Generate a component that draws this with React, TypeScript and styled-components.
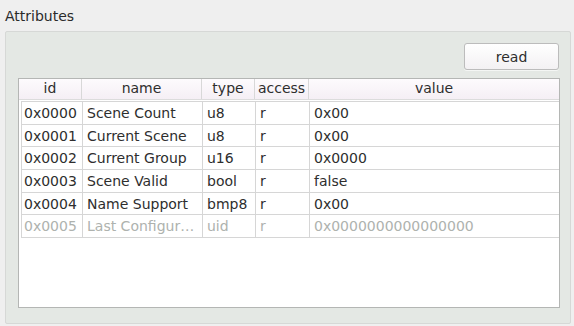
import styled, { createGlobalStyle } from 'styled-components'

type Attribute = {
  id: string
  name: string
  type: string
  access: string
  value: string
  disabled?: boolean
}

const attributes: Attribute[] = [
  { id: '0x0000', name: 'Scene Count', type: 'u8', access: 'r', value: '0x00' },
  { id: '0x0001', name: 'Current Scene', type: 'u8', access: 'r', value: '0x00' },
  { id: '0x0002', name: 'Current Group', type: 'u16', access: 'r', value: '0x0000' },
  { id: '0x0003', name: 'Scene Valid', type: 'bool', access: 'r', value: 'false' },
  { id: '0x0004', name: 'Name Support', type: 'bmp8', access: 'r', value: '0x00' },
  {
    id: '0x0005',
    name: 'Last Configur…',
    type: 'uid',
    access: 'r',
    value: '0x0000000000000000',
    disabled: true,
  },
]

const columns = [
  { key: 'id', label: 'id', width: 63 },
  { key: 'name', label: 'name', width: 120 },
  { key: 'type', label: 'type', width: 53 },
  { key: 'access', label: 'access', width: 54 },
  { key: 'value', label: 'value', width: 250 },
] as const

function App() {
  return (
    <>
      <GlobalStyle />
      <Page>
        <Title>Attributes</Title>
        <GroupBox>
          <Toolbar>
            <ReadButton type="button">read</ReadButton>
          </Toolbar>
          <TableFrame>
            <HeaderRow>
              {columns.map((c) => (
                <HeaderCell key={c.key} $width={c.width}>
                  {c.label}
                </HeaderCell>
              ))}
            </HeaderRow>
            <Grid>
              <colgroup>
                {columns.map((c) => (
                  <col key={c.key} style={{ width: c.key === 'id' ? c.width - 2 : c.width }} />
                ))}
              </colgroup>
              <tbody>
                {attributes.map((a) => (
                  <Row key={a.id} $disabled={a.disabled}>
                    <Cell>{a.id}</Cell>
                    <Cell>{a.name}</Cell>
                    <Cell>{a.type}</Cell>
                    <Cell>{a.access}</Cell>
                    <Cell>{a.value}</Cell>
                  </Row>
                ))}
              </tbody>
            </Grid>
          </TableFrame>
        </GroupBox>
      </Page>
    </>
  )
}

const GlobalStyle = createGlobalStyle`
  html, body {
    margin: 0;
    padding: 0;
    background: #efefef;
  }
  body {
    font-family: "DejaVu Sans", "Liberation Sans", sans-serif;
    font-size: 14px;
    color: #2e2e2e;
  }
`

const Page = styled.div`
  width: 574px;
  height: 326px;
  box-sizing: border-box;
  padding: 8px 3px 2px 5px;
  display: flex;
  flex-direction: column;
`

const Title = styled.div`
  height: 17px;
  line-height: 17px;
  font-size: 14px;
  margin-bottom: 6px;
  color: #2a2a2a;
`

const GroupBox = styled.div`
  flex: 1;
  display: flex;
  flex-direction: column;
  box-sizing: border-box;
  border: 1px solid #d6d8d6;
  border-radius: 2px;
  background: #e4e8e4;
  padding: 11px 10px 15px 12px;
  gap: 8px;
`

const Toolbar = styled.div`
  display: flex;
  justify-content: flex-end;
`

const ReadButton = styled.button`
  width: 95px;
  height: 27px;
  margin-right: 1px;
  font-family: inherit;
  font-size: 14px;
  color: #2e2e2e;
  border: 1px solid #bcbcbc;
  border-radius: 3px;
  background: linear-gradient(#ffffff, #f3f1f3);
  box-shadow: 0 1px 0 rgba(255, 255, 255, 0.6);
  padding: 0;
`

const TableFrame = styled.div`
  flex: 1;
  box-sizing: border-box;
  border: 1px solid #b4b6b4;
  background: #ffffff;
  display: flex;
  flex-direction: column;
  overflow: hidden;
`

const HeaderRow = styled.div`
  display: flex;
  height: 20px;
  border-bottom: 1px solid #dcdcdc;
  background: linear-gradient(#fdfbfd, #f5eff5);
`

const HeaderCell = styled.div<{ $width: number }>`
  width: ${(p) => p.$width}px;
  flex: none;
  box-sizing: border-box;
  border-right: 1px solid #d8d8d8;
  text-align: center;
  line-height: 19px;
  color: #2e2e2e;

  &:last-child {
    flex: 1;
    border-right: none;
  }
`

const Grid = styled.table`
  border-collapse: collapse;
  table-layout: fixed;
  margin: 1px 0 0 2px;
  width: 538px;
`

const Row = styled.tr<{ $disabled?: boolean }>`
  height: 22.7px;
  color: ${(p) => (p.$disabled ? '#aeb2ae' : '#2e2e2e')};
`

const Cell = styled.td`
  border: 1px solid #d6d6d6;
  padding: 0 0 0 2px;
  white-space: nowrap;
  overflow: hidden;
  line-height: 20px;

  &:nth-child(n + 2) {
    padding-left: 4px;
  }
`

export default App
